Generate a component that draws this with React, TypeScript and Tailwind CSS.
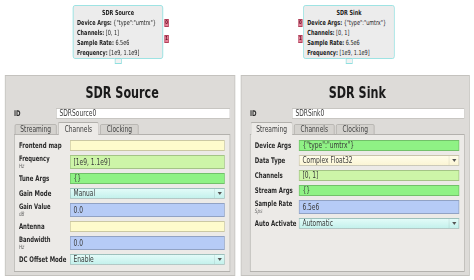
import React from "react";

type Row = {
  label: string;
  unit?: string;
  value: string;
  kind: "input" | "select";
  color: string;
};

const CYAN = "bg-linear-to-b from-[#e2fbf8] to-[#c4f1ec]";
const CREAM = "bg-linear-to-b from-[#fffdea] to-[#fbf5d4]";

const leftRows: Row[] = [
  { label: "Frontend map", value: "", kind: "input", color: "bg-[#fefbcc]" },
  { label: "Frequency", unit: "Hz", value: "[1e9, 1.1e9]", kind: "input", color: "bg-[#cdf5a8]" },
  { label: "Tune Args", value: "{}", kind: "input", color: "bg-[#8ff285]" },
  { label: "Gain Mode", value: "Manual", kind: "select", color: CYAN },
  { label: "Gain Value", unit: "dB", value: "0.0", kind: "input", color: "bg-[#b6cbf6]" },
  { label: "Antenna", value: "", kind: "input", color: "bg-[#fefbcc]" },
  { label: "Bandwidth", unit: "Hz", value: "0.0", kind: "input", color: "bg-[#b6cbf6]" },
  { label: "DC Offset Mode", value: "Enable", kind: "select", color: CYAN },
];

const rightRows: Row[] = [
  { label: "Device Args", value: '{"type":"umtrx"}', kind: "input", color: "bg-[#8ff285]" },
  { label: "Data Type", value: "Complex Float32", kind: "select", color: CREAM },
  { label: "Channels", value: "[0, 1]", kind: "input", color: "bg-[#cdf5a8]" },
  { label: "Stream Args", value: "{}", kind: "input", color: "bg-[#8ff285]" },
  { label: "Sample Rate", unit: "Sps", value: "6.5e6", kind: "input", color: "bg-[#b6cbf6]" },
  { label: "Auto Activate", value: "Automatic", kind: "select", color: CYAN },
];

function Field({ row }: { row: Row }) {
  const h = row.unit ? "h-[14px]" : "h-[11px]";
  return (
    <>
      {row.unit ? (
        <div className="flex flex-col justify-between h-[14px] whitespace-nowrap">
          <span className="font-bold text-[7.5px] leading-[7px] text-[#2a2a2a]">{row.label}</span>
          <span className="italic text-[6px] leading-[6px] text-[#666]">{row.unit}</span>
        </div>
      ) : (
        <div className="flex items-center h-[11px] whitespace-nowrap font-bold text-[7.75px] leading-none text-[#2a2a2a]">
          {row.label}
        </div>
      )}
      <div
        className={`${h} ${row.color} border border-black/20 flex items-center pl-[4px] text-[8.5px] leading-none text-[#3a3a3a] whitespace-nowrap`}
      >
        <span>{row.value}</span>
        {row.kind === "select" && (
          <div className="ml-auto h-full w-[14px] border-l border-black/10 flex items-center justify-center">
            <span className="w-0 h-0 border-l-[3px] border-r-[3px] border-t-[3px] border-l-transparent border-r-transparent border-t-[#555]" />
          </div>
        )}
      </div>
    </>
  );
}

function Tabs({ active }: { active: number }) {
  const names = ["Streaming", "Channels", "Clocking"];
  const widths = ["w-[60px]", "w-[58px]", "w-[55px]"];
  return (
    <div className="flex items-end gap-[2px] h-[13px] ml-[1px] relative z-10 -mb-px">
      {names.map((n, i) =>
        i === active ? (
          <div
            key={n}
            className={`${widths[i]} h-[13px] bg-[#eceae7] border border-b-0 border-[#b3b1ad] rounded-t-[2px] flex items-center justify-center text-[8.5px] leading-none text-[#3c3c3c]`}
          >
            {n}
          </div>
        ) : (
          <div
            key={n}
            className={`${widths[i]} h-[11px] bg-[#d4d2ce] border border-[#b3b1ad] rounded-t-[2px] flex items-center justify-center text-[8.5px] leading-none text-[#444]`}
          >
            {n}
          </div>
        )
      )}
    </div>
  );
}

function Panel({
  title,
  id,
  activeTab,
  rows,
  cols,
  width,
}: {
  title: string;
  id: string;
  activeTab: number;
  rows: Row[];
  cols: string;
  width: string;
}) {
  return (
    <div className={`${width} h-[201px] bg-[#dddbd8] border border-[#c4c2be] pl-[12px] pr-[6px] pt-[7px] pb-[3px] flex flex-col`}>
      <div className="h-[20px] text-center font-bold text-[16px] leading-[20px] text-[#1a1a1a]">{title}</div>
      <div className="flex items-center mt-[5px] h-[11px]">
        <div className="w-[60px] font-bold text-[7.75px] leading-none text-[#2a2a2a]">ID</div>
        <div className="flex-1 h-[11px] bg-white border border-[#c8c6c2] flex items-center pl-[4px] text-[8.5px] leading-none text-[#3a3a3a]">
          {id}
        </div>
      </div>
      <div className="mt-[3px]">
        <Tabs active={activeTab} />
      </div>
      <div className="flex-1 bg-[#eceae7] border border-[#b3b1ad] pl-[6px] pr-[7px] pt-[5px]">
        <div className={`grid ${cols} gap-y-[4px]`}>
          {rows.map((r) => (
            <Field key={r.label} row={r} />
          ))}
        </div>
      </div>
    </div>
  );
}

function Port({ n, className }: { n: string; className: string }) {
  return (
    <div
      className={`absolute w-[6px] h-[8px] bg-[#e58399] border border-[#b1405a] flex items-center justify-center text-[5.5px] font-bold leading-none text-[#6a0f25] ${className}`}
    >
      {n}
    </div>
  );
}

function Block({ title, className }: { title: string; className: string }) {
  return (
    <div
      className={`absolute top-[5px] h-[54px] rounded-[3px] border border-[#8fe0e0] bg-[#ececec] px-[5px] pt-[2px] text-[7px] leading-[10px] text-[#222] whitespace-nowrap ${className}`}
    >
      <div className="text-center font-bold">{title}</div>
      <div>
        <b>Device Args:</b> {'{"type":"umtrx"}'}
      </div>
      <div>
        <b>Channels:</b> [0, 1]
      </div>
      <div>
        <b>Sample Rate:</b> 6.5e6
      </div>
      <div>
        <b>Frequency:</b> [1e9, 1.1e9]
      </div>
    </div>
  );
}

export default function App() {
  return (
    <div className="w-[474px] h-[280px] overflow-hidden bg-white">
      <div className="w-[677px] h-[280px] origin-top-left scale-x-[0.7] font-['DejaVu_Sans',sans-serif]">
        <div className="relative h-[75px]">
          <Block title="SDR Source" className="left-[104px] w-[129px]" />
          <Port n="0" className="left-[235px] top-[19px]" />
          <Port n="1" className="left-[235px] top-[35px]" />
          <div className="absolute left-[164px] top-[58px] w-[10px] h-[6px] border border-[#8fe0e0] bg-[#f2f2f2]" />

          <Block title="SDR Sink" className="left-[433px] w-[131px]" />
          <Port n="0" className="left-[426px] top-[19px]" />
          <Port n="1" className="left-[426px] top-[35px]" />
          <div className="absolute left-[494px] top-[58px] w-[10px] h-[6px] border border-[#8fe0e0] bg-[#f2f2f2]" />
        </div>
        <div className="flex gap-[8px] pl-[7px]">
          <Panel
            title="SDR Source"
            id="SDRSource0"
            activeTab={1}
            rows={leftRows}
            cols="grid-cols-[73px_1fr]"
            width="w-[329px]"
          />
          <Panel
            title="SDR Sink"
            id="SDRSink0"
            activeTab={0}
            rows={rightRows}
            cols="grid-cols-[63px_1fr]"
            width="w-[327px]"
          />
        </div>
      </div>
    </div>
  );
}
